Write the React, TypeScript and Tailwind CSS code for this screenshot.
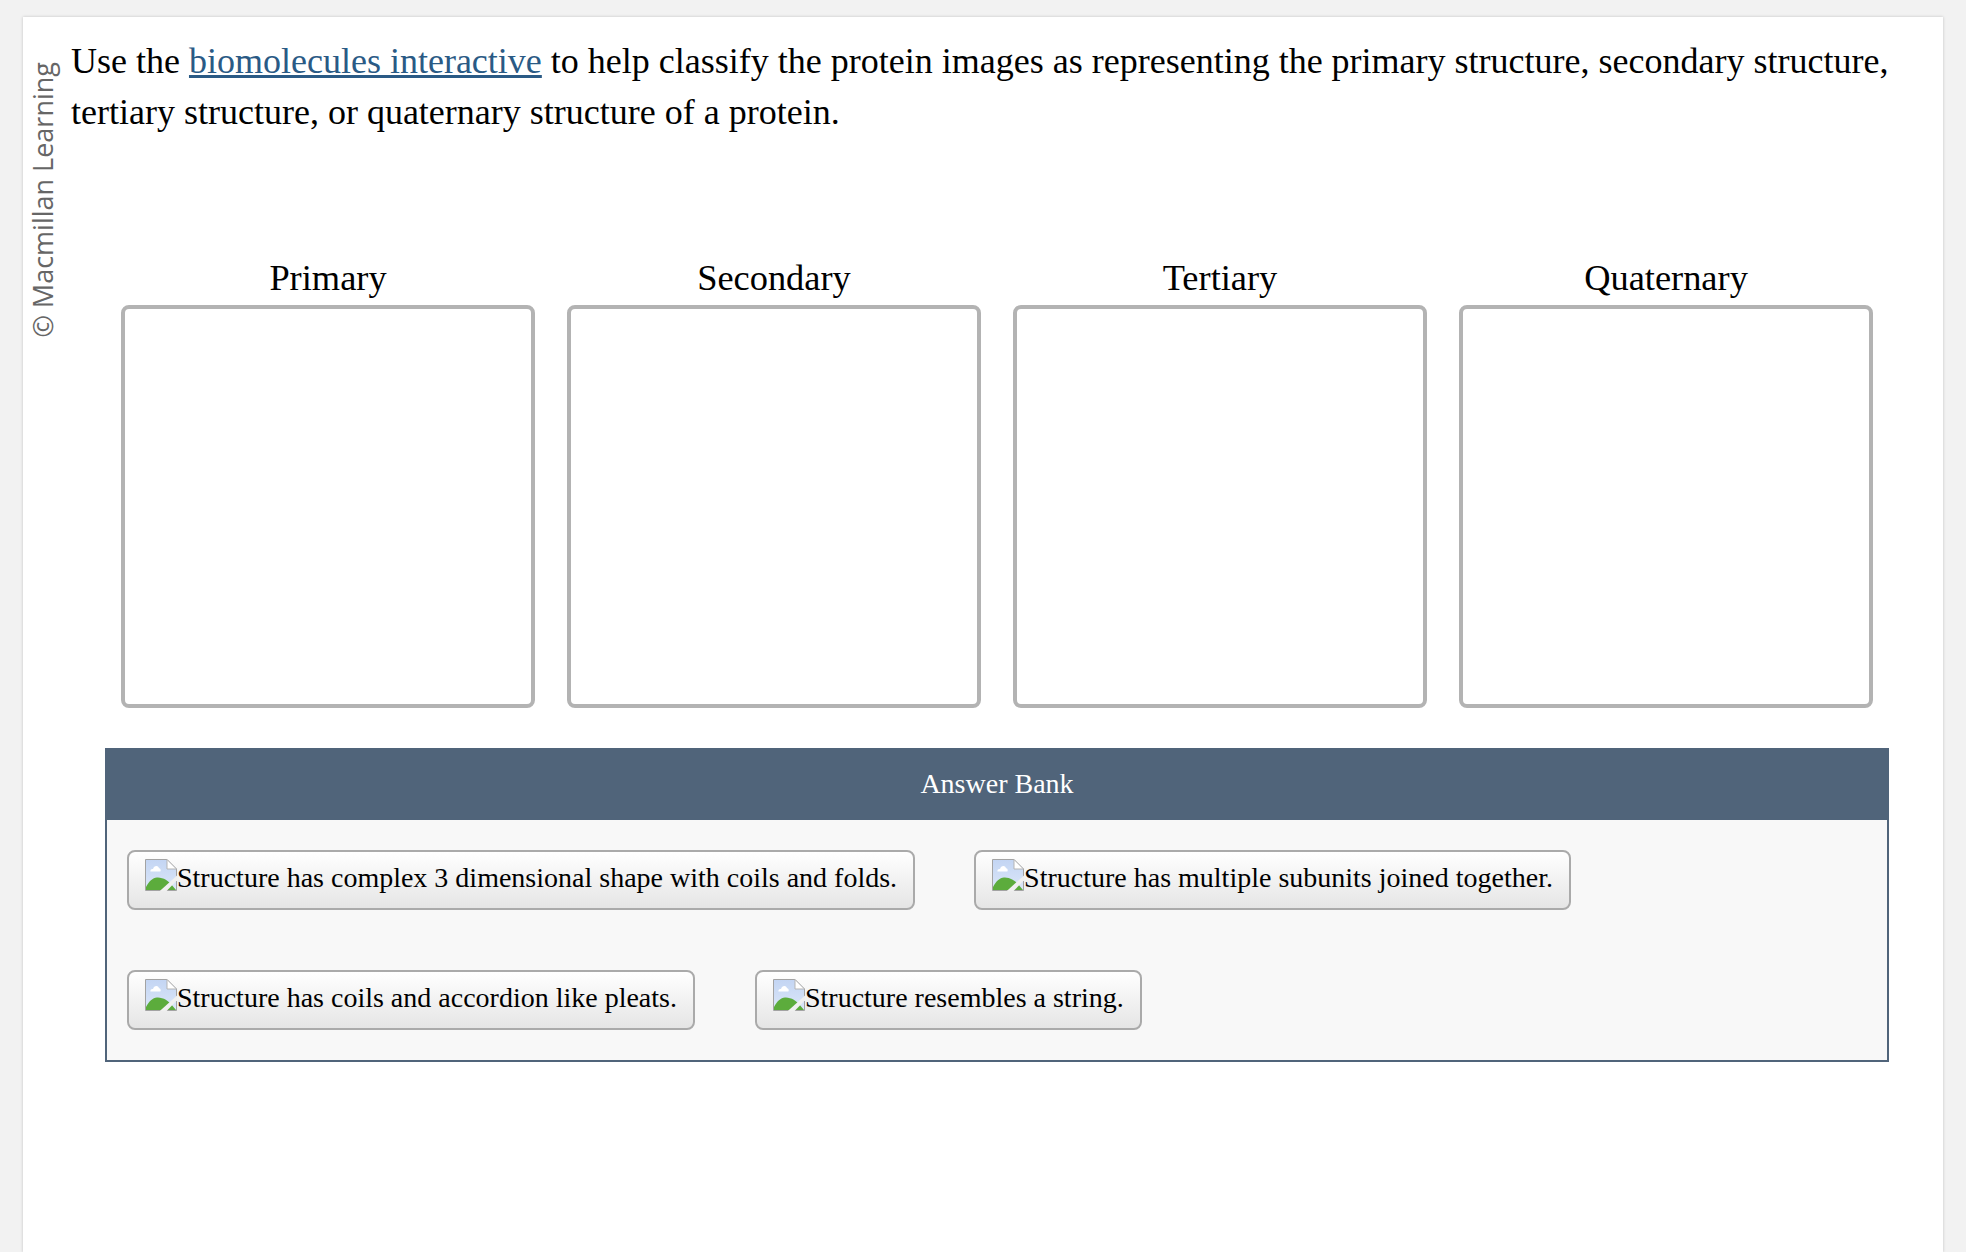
const buckets = ["Primary", "Secondary", "Tertiary", "Quaternary"];

const rows = [
  [
    "Structure has complex 3 dimensional shape with coils and folds.",
    "Structure has multiple subunits joined together.",
  ],
  ["Structure has coils and accordion like pleats.", "Structure resembles a string."],
];

function BrokenImage() {
  return (
    <svg viewBox="0 0 16 16" className="w-8 h-8 shrink-0 mb-[5px]">
      <defs>
        <linearGradient id="sky" x1="0" y1="0" x2="0" y2="1">
          <stop offset="0" stopColor="#c3d5f3" />
          <stop offset="1" stopColor="#dce7f9" />
        </linearGradient>
      </defs>
      <path d="M0.25 0.25H11L15.75 5V15.75H0.25Z" fill="url(#sky)" stroke="#a3a3a3" strokeWidth="0.5" />
      <path d="M11 0.25V5H15.75Z" fill="#fff" stroke="#b5b5b5" strokeWidth="0.5" />
      <path d="M0.5 15.5V14C2 11.2 3.8 9.5 6 9.3C9 9.1 11.8 11 13.4 13L15.5 15.5Z" fill="#5cac3c" />
      <path d="M2.7 6.2C2.6 5.2 3.4 4.8 4 5C4.4 3.2 6.6 3 7 4.6C7.8 4.6 8.1 5.6 7.7 6.2Z" fill="#fff" />
      <path d="M7.4 16L16 8.2V10.6L10.8 16Z" fill="#f0f0f0" />
    </svg>
  );
}

function Token({ text }: { text: string }) {
  return (
    <div className="flex items-center h-[60px] pl-4 pr-4 pb-[5px] border-2 border-[#aaaaaa] rounded-lg bg-gradient-to-b from-[#ffffff] to-[#e5e5e5] text-[28px] text-black">
      <BrokenImage />
      <span>{text}</span>
    </div>
  );
}

export default function App() {
  return (
    <div className="h-screen overflow-hidden bg-[#f2f2f2] pl-[23px] pr-[23px] pt-[17px] font-['Liberation_Serif',serif]">
      <div className="flex h-full w-[1920px] bg-white shadow-[0_0_3px_rgba(0,0,0,0.2)]">
        <div className="w-[48px] shrink-0 pt-[45px] pl-[5px]">
          <div className="[writing-mode:vertical-rl] [text-orientation:sideways] rotate-180 font-['Open_Sans',sans-serif] text-[27px] leading-[30px] text-[#666666]">
            © Macmillan Learning
          </div>
        </div>

        <div className="w-[1822px] pt-[19px]">
          <p className="text-[36px] leading-[51px] text-black">
            Use the{" "}
            <a href="#" className="text-[#2a5a85] underline">
              biomolecules interactive
            </a>{" "}
            to help classify the protein images as representing the primary structure, secondary structure,
            tertiary structure, or quaternary structure of a protein.
          </p>

          <div className="ml-[50px] mt-[120px] grid w-[1752px] grid-cols-4 gap-x-8">
            {buckets.map((name) => (
              <div key={name}>
                <div className="h-[47px] text-center text-[36.4px] leading-[40px] text-black">{name}</div>
                <div className="h-[403px] border-4 border-[#b3b3b3] rounded-lg bg-white" />
              </div>
            ))}
          </div>

          <div className="ml-[34px] mt-[40px] w-[1784px] border-2 border-[#50647a] bg-[#f8f8f8]">
            <div className="flex h-[70px] pb-[2px] items-center justify-center bg-[#50647a] text-[28px] text-white">
              Answer Bank
            </div>
            <div className="flex flex-col gap-y-[60px] pl-5 pt-[30px] pb-[30px]">
              {rows.map((row, i) => (
                <div key={i} className={i === 0 ? "flex gap-x-[59px]" : "flex gap-x-[60px]"}>
                  {row.map((text) => (
                    <Token key={text} text={text} />
                  ))}
                </div>
              ))}
            </div>
          </div>
        </div>
      </div>
    </div>
  );
}
